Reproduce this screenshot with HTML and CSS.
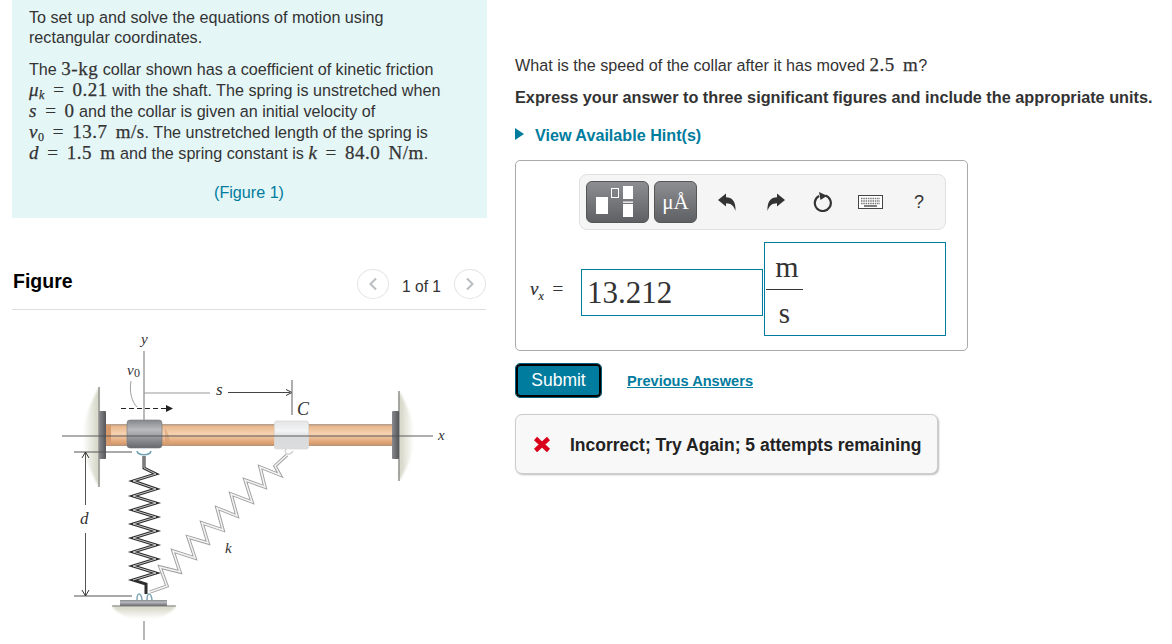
FILE: index.html
```html
<!DOCTYPE html>
<html lang="en">
<head>
<meta charset="utf-8">
<title>Equations of motion</title>
<link rel="stylesheet" href="styles.css">
</head>
<body>
<div class="page">
  <div class="left">
    <div class="intro">
      <p class="goal">To set up and solve the equations of motion using<br>rectangular coordinates.</p>
      <p class="problem">The <span class="m">3-kg</span> collar shown has a coefficient of kinetic friction<br>
      <span class="m"><i>μ<sub>k</sub></i> = 0.21</span> with the shaft. The spring is unstretched when<br>
      <span class="m"><i>s</i> = 0</span> and the collar is given an initial velocity of<br>
      <span class="m"><i>v</i><sub>0</sub> = 13.7 m/s</span>. The unstretched length of the spring is<br>
      <span class="m"><i>d</i> = 1.5 m</span> and the spring constant is <span class="m"><i>k</i> = 84.0 N/m</span>.</p>
      <p class="figlink"><a href="#fig">(Figure 1)</a></p>
    </div>
    <div class="fighead" id="fig">
      <h2>Figure</h2>
      <div class="pager">
        <span class="round"><svg width="10" height="14" viewBox="0 0 10 14"><path d="M8 1.500 2.500 7 8 12.500" fill="none" stroke="#b9bcc0" stroke-width="2"/></svg></span>
        <span class="count">1 of 1</span>
        <span class="round"><svg width="10" height="14" viewBox="0 0 10 14"><path d="M2 1.500 7.500 7 2 12.500" fill="none" stroke="#b9bcc0" stroke-width="2"/></svg></span>
      </div>
    </div>
    <svg class="diagram" width="474" height="334" viewBox="12 310 474 334">
      <defs>
        <linearGradient id="shaft" x1="0" y1="0" x2="0" y2="1">
          <stop offset="0" stop-color="#a99a8c"/><stop offset=".12" stop-color="#eab88c"/><stop offset=".45" stop-color="#f5d2b2"/><stop offset=".85" stop-color="#dfa171"/><stop offset="1" stop-color="#b99478"/>
        </linearGradient>
        <linearGradient id="collar" x1="0" y1="0" x2="0" y2="1">
          <stop offset="0" stop-color="#85878c"/><stop offset=".35" stop-color="#b9bbbf"/><stop offset=".6" stop-color="#9a9ca1"/><stop offset="1" stop-color="#65676c"/>
        </linearGradient>
        <linearGradient id="ghost" x1="0" y1="0" x2="0" y2="1">
          <stop offset="0" stop-color="#e4e5e6"/><stop offset=".35" stop-color="#f3f4f4"/><stop offset=".6" stop-color="#d9dadb"/><stop offset="1" stop-color="#dcdddd"/>
        </linearGradient>
        <linearGradient id="plate" x1="0" y1="0" x2="1" y2="0">
          <stop offset="0" stop-color="#88898c"/><stop offset="1" stop-color="#55565a"/>
        </linearGradient>
        <linearGradient id="wallL" x1="1" y1="0" x2="0" y2="0">
          <stop offset="0" stop-color="#d2d3c2"/><stop offset="1" stop-color="#ffffff"/>
        </linearGradient>
        <linearGradient id="wallR" x1="0" y1="0" x2="1" y2="0">
          <stop offset="0" stop-color="#d2d3c2"/><stop offset="1" stop-color="#ffffff"/>
        </linearGradient>
        <linearGradient id="floor" x1="0" y1="0" x2="0" y2="1">
          <stop offset="0" stop-color="#d2d3c2"/><stop offset="1" stop-color="#ffffff"/>
        </linearGradient>
        <filter id="soft"><feGaussianBlur stdDeviation="0.35"/></filter>
        <filter id="softer"><feGaussianBlur stdDeviation="1.200"/></filter>
      </defs>
      <g filter="url(#softer)">
        <path d="M99 387C90 405 83 420 83 437C83 455 90 470 99 487Z" fill="url(#wallL)"/>
        <path d="M399 391C408 407 414 422 414 436C414 452 408 466 399 481Z" fill="url(#wallR)"/>
        <path d="M112 606H176C170 615 158 619 144 619C130 619 118 615 112 606Z" fill="url(#floor)"/>
      </g>
      <g filter="url(#soft)">
        <path d="M99 387V487M399 391V481" stroke="#777" stroke-width="1.200" fill="none"/>
        <rect x="106" y="424" width="287" height="22" fill="url(#shaft)"/>
        <rect x="106" y="425" width="5" height="20" fill="#d69a6c"/>
        <path d="M162 446C170 444 172 440 165 428V446Z" fill="#d99f72" opacity=".6"/>
        <rect x="99" y="411" width="7" height="48" rx="1" fill="url(#plate)"/>
        <rect x="392" y="411" width="7" height="48" rx="1" fill="url(#plate)"/>
        <rect x="127" y="420" width="35" height="28" rx="3" fill="url(#collar)" stroke="#77797d" stroke-width=".6"/>
        <rect x="274.500" y="421" width="34" height="28" rx="2" fill="url(#ghost)" stroke="#d9d9d9" stroke-width=".8"/>
        <path d="M62 436H433" stroke="#4d4d4d" stroke-width=".9"/>
        <path d="M144 351V421" stroke="#8a8a8a" stroke-width="1.200"/>
        <path d="M144 393H210" stroke="#9a9a9a" stroke-width="1.200"/>
        <path d="M228 392.500H290" stroke="#444" stroke-width="1"/>
        <path d="M286 389.500 292 392.500 286 395.500" stroke="#333" stroke-width="1" fill="none"/>
        <path d="M292 380V415" stroke="#777" stroke-width="1.200"/>
        <path d="M121 408.500H166" stroke="#222" stroke-width="1.200" stroke-dasharray="5 3"/>
        <path d="M166 405 173 408.500 166 412Z" fill="#222"/>
        <path d="M131 381C129 392 132 402 137 407" stroke="#888" stroke-width=".8" fill="none"/>
        <path d="M74 452H132M74 596H132" stroke="#555" stroke-width="1"/>
        <path d="M85.500 453V505M85.500 533V595" stroke="#555" stroke-width="1"/>
        <path d="M82 458 85.500 452 89 458M82 590 85.500 596 89 590" stroke="#333" stroke-width="1" fill="none"/>
        <path d="M137 451C138 456 150 456 151 451" stroke="#6fa3b5" stroke-width="1.500" fill="none"/>
        <path d="M293 451C290 456 283 454 286 449" stroke="#d5d5d5" stroke-width="1.500" fill="none"/>
        <path d="M144 456V468L156 474 133 481 156 489 133 496 156 503 133 510 156 517 133 524 156 531 133 538 156 545 133 552 156 559 133 566 156 573 133 580 146 584V594" stroke="#2e2e2e" stroke-width="3" fill="none"/>
        <path d="M144 456V468L156 474 133 481 156 489 133 496 156 503 133 510 156 517 133 524 156 531 133 538 156 545 133 552 156 559 133 566 156 573 133 580" stroke="#c8c8c8" stroke-width="1" fill="none"/>
        <path d="M150 592 167 586 160 567 180 572 173 551 195 558 188 537 208 543 202 523 223 530 217 508 237 516 231 494 252 502 245 480 265 487 260 467 280 475 275 466 287 455" stroke="#a0a0a0" stroke-width="3.400" fill="none"/>
        <path d="M150 592 167 586 160 567 180 572 173 551 195 558 188 537 208 543 202 523 223 530 217 508 237 516 231 494 252 502 245 480 265 487 260 467 280 475 275 466 287 455" stroke="#f4f4f4" stroke-width="1.500" fill="none"/>
        <path d="M137 600C137 592 141 592 142 600M147 600C147 592 151 592 152 600" stroke="#7fa6b5" stroke-width="1.500" fill="none"/>
        <rect x="120" y="600" width="47" height="6" fill="url(#collar)"/>
        <path d="M112 606H176" stroke="#777" stroke-width="1"/>
        <path d="M144 621V640" stroke="#888" stroke-width="1.200"/>
      </g>
      <g class="fig-label">
        <text x="141" y="344">y</text>
        <text x="127" y="375">v</text><text class="fig-sub" x="134" y="377">0</text>
        <text x="216" y="395" class="fig-s">s</text>
        <text x="297" y="415" class="fig-big">C</text>
        <text x="438" y="440">x</text>
        <text x="80" y="524" class="fig-s">d</text>
        <text x="225" y="553">k</text>
      </g>
    </svg>
  </div>
  <div class="right">
    <p class="question">What is the speed of the collar after it has moved <span class="m">2.5 m</span>?</p>
    <p class="express">Express your answer to three significant figures and include the appropriate units.</p>
    <p class="hint"><svg class="caret" width="9" height="12" viewBox="0 0 9 12"><path d="M0 0 9 6 0 12Z"/></svg><a href="#hint">View Available Hint(s)</a></p>
    <div class="answer">
      <div class="toolbar">
        <button class="tool tmpl" type="button" aria-label="Templates">
          <svg width="63" height="42" viewBox="0 0 63 42">
            <rect x="10" y="16" width="12" height="17" fill="#fff"/>
            <rect x="25.500" y="7.500" width="7" height="9" fill="none" stroke="#fff"/>
            <rect x="37" y="5" width="10" height="13" fill="#fff"/>
            <rect x="37" y="20.500" width="10" height="1.300" fill="#fff"/>
            <rect x="37" y="23" width="10" height="13" fill="#fff"/>
          </svg>
        </button>
        <button class="tool units" type="button">μÅ</button>
        <svg class="ico first" width="18" height="18" viewBox="0 0 18 18"><path d="M0 7 8 .5V4.200C14 4.200 18 8 17.500 18C16 13 13 10.300 8 10.300V13.500Z" fill="#333"/></svg>
        <svg class="ico second" width="18" height="18" viewBox="0 0 18 18"><path d="M18 7 10 .5V4.200C4 4.200 0 8 .5 18C2 13 5 10.300 10 10.300V13.500Z" fill="#333"/></svg>
        <svg class="ico third" width="20" height="20" viewBox="0 0 20 20"><path d="M12.500 3.500A8 8 0 1 1 6 4" fill="none" stroke="#333" stroke-width="2.200"/><path d="M6 0 14 3.800 7.500 8Z" fill="#333"/></svg>
        <svg class="ico fourth" width="25" height="14" viewBox="0 0 25 14"><rect x=".5" y=".5" width="24" height="13" fill="#fff" stroke="#444"/><path d="M3 3.500H22M3 6H22M3 8.500H22" stroke="#777" stroke-width="1.500" stroke-dasharray="1.500 .8"/><path d="M6 11H19" stroke="#555" stroke-width="1.500"/></svg>
        <span class="help">?</span>
      </div>
      <div class="entry">
        <span class="lhs"><i>v<sub>x</sub></i> =</span>
        <div class="value">13.212</div>
        <div class="unitbox">
          <div class="frac"><span class="num">m</span><span class="den">s</span></div>
        </div>
      </div>
    </div>
    <div class="actions">
      <button class="submit" type="button">Submit</button>
      <a class="prev" href="#prev">Previous Answers</a>
    </div>
    <div class="feedback">
      <svg width="18" height="17" viewBox="0 0 18 17"><path d="M2.500 2.500 15.500 14.500M15.500 2.500 2.500 14.500" stroke="#d9001b" stroke-width="4.500"/></svg>
      <span>Incorrect; Try Again; 5 attempts remaining</span>
    </div>
  </div>
</div>
</body>
</html>
```
FILE: styles.css
```css
* { box-sizing: border-box; }
html, body { margin: 0; padding: 0; background: #fff; }
body { font-family: "Liberation Sans", Arial, sans-serif; font-size: 16.150px; color: #333; height: 644px; overflow: hidden; }
p { margin: 0; }
a { color: #007c9e; text-decoration: none; }
.page { display: flex; padding-left: 12px; }
.left { width: 475px; flex: none; }
.right { margin-left: 28px; flex: none; width: 640px; padding-top: 55px; }
.intro { background: #e5f6f7; height: 218px; padding: 7px 17px 0; }
.goal { line-height: 20px; }
.problem { margin-top: 12px; line-height: 21px; }
.figlink { margin-top: 18px; text-align: center; padding-right: 1px; line-height: 20px; }
.m { font-family: "Liberation Serif", "Times New Roman", serif; font-size: 19px; line-height: 0; letter-spacing: .5px; word-spacing: 3px; -webkit-text-stroke: .25px #333; }
.m sub { font-size: 12px; line-height: 0; vertical-align: -3px; }
.fighead { display: flex; justify-content: space-between; align-items: center; height: 92px; padding-top: 34px; border-bottom: 1px solid #ddd; width: 474px; }
.fighead h2 { margin: 0 0 0 1px; font-size: 19.500px; font-weight: bold; color: #000; line-height: 56px; height: 56px; }
.pager { display: flex; align-items: center; gap: 13px; height: 56px; margin-top: 6px; }
.count { color: #333; font-size: 15.600px; padding-top: 7px; }
.round { width: 32px; height: 30px; border: 1px solid #e4e4e4; border-radius: 50%; display: flex; align-items: center; justify-content: center; }
.diagram { display: block; }
.fig-label text { font-family: "Liberation Serif", serif; font-style: italic; font-size: 15px; fill: #333; }
.fig-label .fig-sub { font-size: 12px; font-style: normal; }
.fig-label .fig-s { font-size: 17px; }
.fig-label .fig-big { font-size: 18px; }
.question { line-height: 20px; }
.express { margin-top: 12px; font-weight: bold; line-height: 20px; font-size: 16.250px; white-space: nowrap; }
.hint { margin-top: 18px; line-height: 20px; font-weight: bold; display: flex; align-items: center; }
.hint a { margin-left: 11px; }
.caret { fill: #007c9e; margin-top: -3px; }
.answer { width: 453px; height: 191px; margin-top: 15px; border: 1px solid #aaa; border-radius: 5px; padding: 13px 21px 0 63px; }
.toolbar { width: 367px; height: 56px; background: #f5f5f5; border: 1px solid #e0e0e0; border-radius: 8px; display: flex; align-items: center; padding-left: 6px; }
.tool { border: 1px solid #555; border-radius: 6px; background: linear-gradient(#8d8e92, #5f6064); padding: 0; height: 42px; color: #fff; }
.tmpl { width: 63px; }
.tmpl svg { display: block; margin: -1px 0 0 -1px; }
.units { width: 43px; margin-left: 5px; font-family: "Liberation Serif", serif; font-size: 21px; line-height: 40px; }
.ico { flex: none; }
.first { margin-left: 21px; }
.second { margin-left: 31px; }
.third { margin-left: 28px; }
.fourth { margin-left: 25px; }
.help { margin-left: 31px; font-size: 18px; color: #333; }
.entry { display: flex; align-items: center; margin-left: -48px; margin-top: 11px; height: 95px; }
.lhs { font-family: "Liberation Serif", serif; font-size: 19px; word-spacing: 4px; width: 50px; margin-left: -1px; margin-right: 1px; -webkit-text-stroke: .2px #333; white-space: nowrap; }
.lhs sub { font-size: 12px; line-height: 0; }
.value { width: 182px; height: 47px; border: 1px solid #007c9e; font-family: "Liberation Serif", serif; font-size: 31px; line-height: 45px; padding-left: 5px; margin-top: 8px; }
.unitbox { width: 182px; height: 94px; margin-left: 1px; border: 1px solid #007c9e; padding: 1px 0 0 1px; }
.frac { width: 37px; font-family: "Liberation Serif", serif; display: flex; flex-direction: column; align-items: center; }
.num { height: 46px; line-height: 46px; width: 100%; text-align: center; border-bottom: 1px solid #333; font-size: 30px; padding-left: 5px; }
.den { line-height: 46px; font-size: 29px; }
.actions { display: flex; align-items: center; margin-top: 12px; height: 35px; }
.submit { width: 85px; height: 33px; margin-left: 1px; background: #007c9e; color: #fff; font: 17.500px "Liberation Sans", Arial, sans-serif; border: 2px solid #000; border-radius: 4px; outline: 1px solid #005f7a; outline-offset: 0; padding: 0; }
.prev { margin-left: 26px; font-weight: bold; font-size: 14.600px; text-decoration: underline; }
.feedback { width: 423px; height: 60px; margin-top: 16px; background: #f8f8f8; border: 1px solid #ccc; border-radius: 7px; box-shadow: 1px 1px 2px #bbb; display: flex; align-items: center; padding-left: 17px; font-weight: bold; font-size: 17.500px; color: #222; }
.feedback span { margin-left: 19px; padding-top: 2px; }
```
